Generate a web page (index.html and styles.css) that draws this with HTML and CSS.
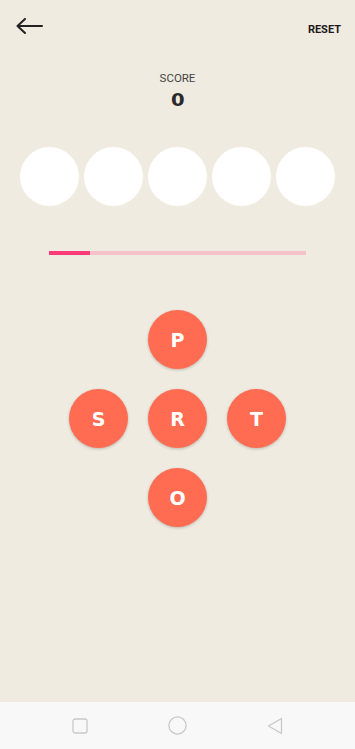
FILE: index.html
```html
<!DOCTYPE HTML>
<html>
<head>
    <meta charset="utf-8" />
    <title>Word Game</title>
    <link rel="stylesheet" href="styles.css">
</head>
<body>
<div class="screen">
    <div class="topbar">
        <span class="back" title="Back">
            <svg width="27" height="16" viewBox="0 0 27 16">
                <path d="M1.5 8 H26 M9 1 L1.5 8 L9 15" fill="none" stroke="#222" stroke-width="2" stroke-linecap="round" stroke-linejoin="round"/>
            </svg>
        </span>
        <span class="reset">RESET</span>
    </div>

    <div class="score">
        <div class="score-label">SCORE</div>
        <div class="score-value">0</div>
    </div>

    <div class="slots">
        <div class="slot"></div>
        <div class="slot"></div>
        <div class="slot"></div>
        <div class="slot"></div>
        <div class="slot"></div>
    </div>

    <div class="timer">
        <div class="timer-fill" style="width: 16%"></div>
    </div>

    <div class="pad">
        <div class="key k-top">P</div>
        <div class="key k-left">S</div>
        <div class="key k-mid">R</div>
        <div class="key k-right">T</div>
        <div class="key k-bottom">O</div>
    </div>
</div>

<div class="navbar">
    <svg width="16" height="16" viewBox="0 0 16 16"><rect x="1" y="1" width="14" height="14" rx="2" fill="none" stroke="#c8c8c8" stroke-width="1.3"/></svg>
    <svg width="19" height="19" viewBox="0 0 19 19"><circle cx="9.5" cy="9.5" r="8.6" fill="none" stroke="#c8c8c8" stroke-width="1.3"/></svg>
    <svg width="16" height="18" viewBox="0 0 16 18"><path d="M14.5 1.5 V16.5 L1.5 9 Z" fill="none" stroke="#c8c8c8" stroke-width="1.3" stroke-linejoin="round"/></svg>
</div>
</body>
</html>
```

FILE: styles.css
```css
html, body {
    margin: 0;
    padding: 0;
}
body {
    width: 355px;
    height: 749px;
    background: #f0ebe1;
    font-family: Roboto, "Liberation Sans", sans-serif;
    display: flex;
    flex-direction: column;
    overflow: hidden;
}
.screen {
    flex: 1;
    display: flex;
    flex-direction: column;
    align-items: center;
}
.topbar {
    align-self: stretch;
    display: flex;
    justify-content: space-between;
    align-items: center;
    padding: 18px 14px 0 16px;
    height: 16px;
}
.back {
    display: flex;
}
.reset {
    font-size: 11px;
    font-weight: bold;
    color: #1a1a1a;
    margin-top: 6px;
}
.score {
    margin-top: 38px;
    display: flex;
    flex-direction: column;
    align-items: center;
}
.score-label {
    font-size: 11.5px;
    color: #444;
    line-height: 12px;
}
.score-value {
    margin-top: 5px;
    height: 22px;
    line-height: 22px;
    font-family: "DejaVu Sans", sans-serif;
    font-weight: bold;
    font-size: 17px;
    color: #2a2a2a;
    transform: scaleX(1.15);
}
.slots {
    margin-top: 36px;
    display: flex;
    gap: 5px;
}
.slot {
    width: 59px;
    height: 59px;
    border-radius: 50%;
    background: #fff;
}
.timer {
    margin-top: 45px;
    width: 257px;
    height: 4px;
    background: #f7c1ca;
}
.timer-fill {
    height: 100%;
    background: #ff3a7a;
}
.pad {
    margin-top: 55px;
    display: grid;
    grid-template-columns: repeat(3, 59px);
    grid-template-rows: repeat(3, 59px);
    gap: 20px;
}
.key {
    border-radius: 50%;
    background: #ff6c51;
    color: #fff;
    font-family: "DejaVu Sans", sans-serif;
    font-weight: bold;
    font-size: 19px;
    display: flex;
    align-items: center;
    justify-content: center;
    box-shadow: 0 1px 3px rgba(0,0,0,0.22);
}
.k-top { grid-column: 2; grid-row: 1; }
.k-left { grid-column: 1; grid-row: 2; }
.k-mid { grid-column: 2; grid-row: 2; }
.k-right { grid-column: 3; grid-row: 2; }
.k-bottom { grid-column: 2; grid-row: 3; }
.navbar {
    height: 47px;
    background: #f8f8f8;
    display: flex;
    justify-content: center;
    align-items: center;
    gap: 80px;
}
```
